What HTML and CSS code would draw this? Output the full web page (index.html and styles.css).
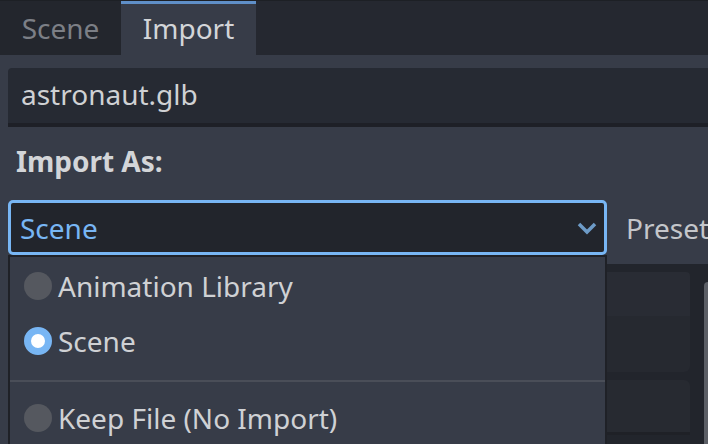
FILE: index.html
```html
<!DOCTYPE html>
<html>
<head>
<meta charset="utf-8">
<link rel="stylesheet" href="styles.css">
</head>
<body>
<div class="tabbar">
  <div class="tab">Scene</div>
  <div class="tab active">Import</div>
</div>
<main class="panel">
  <div class="filename">astronaut.glb</div>
  <div class="label">Import As:</div>
  <div class="selrow">
    <div class="select">
      <span>Scene</span>
      <svg class="chev" viewBox="0 0 20 12"><polyline points="2,2 10,10 18,2"/></svg>
    </div>
    <div class="preset">Preset</div>
  </div>
  <div class="lower">
    <div class="inspector">
      <div class="list">
        <div class="box b1"></div>
        <div class="box b2"></div>
        <div class="box b3"></div>
      </div>
      <div class="scroll"></div>
    </div>
    <div class="popup">
      <div class="item"><span class="radio"></span><span>Animation Library</span></div>
      <div class="item"><span class="radio on"></span><span>Scene</span></div>
      <div class="sep"></div>
      <div class="item"><span class="radio"></span><span>Keep File (No Import)</span></div>
    </div>
  </div>
</main>
</body>
</html>
```
FILE: styles.css
```css
* { box-sizing: border-box; }
html, body { margin: 0; padding: 0; overflow: hidden; }
body {
  width: 708px;
  height: 444px;
  background: #373c48;
  font-family: "Noto Sans", "DejaVu Sans", sans-serif;
  font-size: 28px;
  line-height: 38px;
  color: #cfd1d4;
}
.tabbar {
  display: flex;
  height: 55px;
  border-top: 1px solid #1d2025;
  background: #252830;
}
.tab {
  width: 121px;
  display: flex;
  align-items: center;
  justify-content: center;
  color: #7c7f86;
  background: #23262d;
}
.tab.active {
  width: 135px;
  background: #373c48;
  color: #d3d5d8;
  box-shadow: inset 0 3px 0 #5f8fc8;
}
.panel {
  padding: 13px 0 0 8px;
}
.filename {
  width: 710px;
  height: 59px;
  background: #262a33;
  border-bottom: 4px solid #1e2027;
  border-radius: 4px 0 0 0;
  padding: 0 0 4px 13px;
  display: flex;
  align-items: center;
}
.label {
  font-weight: 700;
  color: #d3d5d8;
  margin: 15px 0 20px 8px;
}
.selrow {
  display: flex;
  align-items: center;
  height: 55px;
}
.select {
  flex: none;
  width: 599px;
  height: 55px;
  border: 3px solid #78b6f4;
  border-radius: 5px;
  background: #22252c;
  color: #78b6f4;
  display: flex;
  align-items: center;
  justify-content: space-between;
  padding: 0 7px 0 9px;
}
.chev {
  width: 20px;
  height: 12px;
  fill: none;
  stroke: #6d9bc7;
  stroke-width: 3.5;
  overflow: visible;
}
.preset {
  margin-left: 19px;
  color: #c4c6ca;
  white-space: nowrap;
}
.lower {
  position: relative;
  height: 189px;
  padding-top: 9px;
}
.inspector {
  width: 704px;
  height: 180px;
  background: #22252c;
  display: flex;
  padding: 8px 0 0 8px;
}
.list {
  flex: 1;
  display: flex;
  flex-direction: column;
}
.box.b1 { height: 44px; background: #292c34; border-radius: 4px 4px 0 0; }
.box.b2 { height: 56px; background: #262930; border-radius: 0 0 6px 6px; }
.box.b3 { height: 52px; margin-top: 8px; background: #272a31; border-radius: 6px 6px 0 0; box-shadow: 0 3px 0 #1f2127; }
.scroll {
  flex: none;
  width: 8px;
  margin: 10px 0 0 14px;
  background: #5c5f66;
  border-radius: 4px 4px 0 0;
}
.popup {
  position: absolute;
  left: 0;
  top: 0;
  width: 599px;
  bottom: -10px;
  background: #373c48;
  border: 2px solid #1f2127;
  border-bottom: none;
  padding-top: 3px;
}
.item {
  height: 55px;
  display: flex;
  align-items: center;
  gap: 6px;
  padding: 0 0 3px 14px;
}
.radio {
  flex: none;
  width: 28px;
  height: 28px;
  border-radius: 50%;
  background: #55585f;
}
.radio.on {
  background: #ffffff;
  border: 7px solid #78b6f4;
}
.sep {
  height: 2px;
  background: #4a4e58;
  margin: 10px 0;
}
```
